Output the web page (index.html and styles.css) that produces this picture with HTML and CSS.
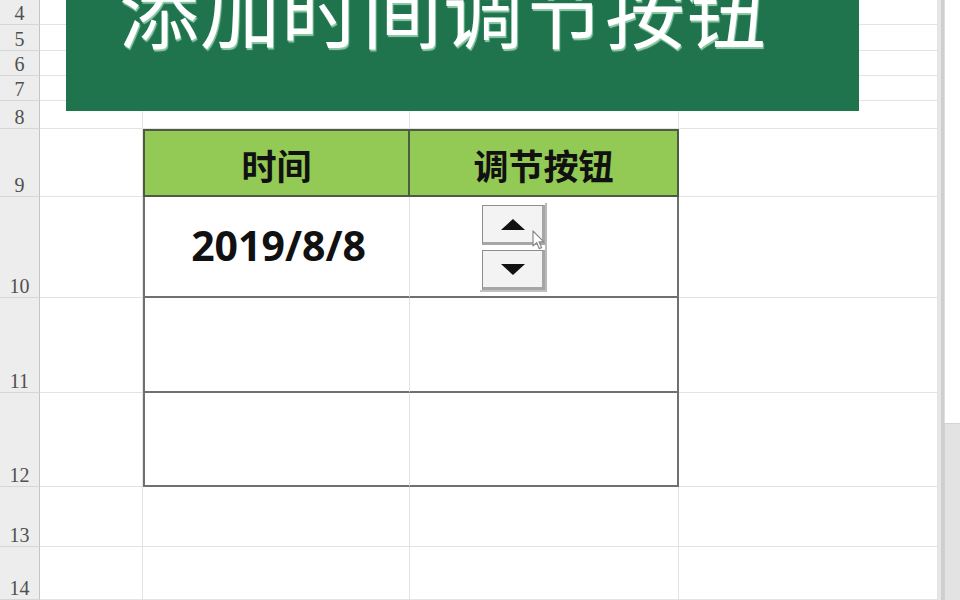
FILE: index.html
```html
<!DOCTYPE html>
<html lang="zh-CN">
<head>
<meta charset="utf-8">
<title>添加时间调节按钮</title>
<link rel="stylesheet" href="styles.css">
</head>
<body>
<div class="screen">
  <div class="sheet">
    <div class="rh">4</div><div class="c"></div><div class="c"></div><div class="c"></div><div class="c"></div>
    <div class="rh">5</div><div class="c"></div><div class="c"></div><div class="c"></div><div class="c"></div>
    <div class="rh">6</div><div class="c"></div><div class="c"></div><div class="c"></div><div class="c"></div>
    <div class="rh">7</div><div class="c"></div><div class="c"></div><div class="c"></div><div class="c"></div>
    <div class="rh">8</div><div class="c"></div><div class="c"></div><div class="c"></div><div class="c"></div>

    <div class="rh">9</div><div class="c"></div><div class="c th th-l">时间</div><div class="c th th-r">调节按钮</div><div class="c"></div>

    <div class="rh">10</div><div class="c"></div><div class="c td-l date">2019/8/8</div>
    <div class="c td-r spin-cell">
      <div class="spinner">
        <div class="spin-btn">
          <svg class="tri" width="24" height="11" viewBox="0 0 24 11"><polygon points="12,0 24,11 0,11" fill="#111"/></svg>
        </div>
        <div class="spin-btn">
          <svg class="tri" width="24" height="11" viewBox="0 0 24 11"><polygon points="0,0 24,0 12,11" fill="#111"/></svg>
        </div>
        <svg class="cursor" width="13" height="20" viewBox="0 0 13 20"><path d="M1,1 L1,16 L4.6,12.6 L7.2,18.6 L9.6,17.6 L7,11.8 L11.8,11.8 Z" fill="#fff" stroke="#8a8a8a" stroke-width="1.2" stroke-linejoin="round"/></svg>
      </div>
    </div>
    <div class="c"></div>

    <div class="rh">11</div><div class="c"></div><div class="c td-l"></div><div class="c td-r"></div><div class="c"></div>
    <div class="rh">12</div><div class="c"></div><div class="c td-l"></div><div class="c td-r"></div><div class="c"></div>
    <div class="rh">13</div><div class="c"></div><div class="c"></div><div class="c"></div><div class="c"></div>
    <div class="rh">14</div><div class="c"></div><div class="c"></div><div class="c"></div><div class="c"></div>

    <div class="banner"><span class="banner-title">添加时间调节按钮</span></div>
  </div>
  <div class="vscroll">
    <div class="track"></div>
    <div class="thumb"></div>
  </div>
</div>
</body>
</html>
```
FILE: styles.css
```css
* { box-sizing: border-box; }

html, body {
  margin: 0;
  padding: 0;
  background: #ffffff;
}

body {
  width: 960px;
  height: 600px;
  overflow: hidden;
  font-family: "Noto Sans", "Noto Sans CJK SC", sans-serif;
}

.screen {
  display: flex;
  width: 960px;
  height: 600px;
  overflow: hidden;
}

.sheet {
  position: relative;
  display: grid;
  grid-template-columns: 40px 103px 267px 269px 259px;
  grid-template-rows: 25px 26px 25px 25px 28px 68px 101px 95px 94px 60px 53px;
  width: 938px;
  height: 600px;
  flex: none;
}

.rh {
  display: flex;
  align-items: flex-end;
  justify-content: center;
  background: #ededed;
  border-right: 1px solid #c4c4c4;
  border-bottom: 1px solid #d6d6d6;
  font-family: "Liberation Serif", "DejaVu Serif", serif;
  font-size: 20px;
  line-height: 1;
  color: #505050;
  padding-bottom: 1px;
}

.c {
  border-right: 1px solid #e3e3e3;
  border-bottom: 1px solid #e3e3e3;
  background: #ffffff;
}

.th {
  display: flex;
  align-items: center;
  justify-content: center;
  background: #93c955;
  border-top: 2px solid #4f5a45;
  border-bottom: 2px solid #4f5a45;
  font-family: "Noto Sans CJK SC", sans-serif;
  font-weight: 700;
  font-size: 35px;
  color: #111111;
  padding-top: 2px;
}

.th-l {
  border-left: 2px solid #4f5a45;
  border-right: 2px solid #4f5a45;
}

.th-r {
  border-right: 2px solid #4f5a45;
}

.td-l {
  border-left: 2px solid #707070;
  border-bottom: 2px solid #707070;
}

.td-r {
  border-right: 2px solid #707070;
  border-bottom: 2px solid #707070;
}

.date {
  display: flex;
  align-items: center;
  justify-content: center;
  font-family: "Noto Sans", "Open Sans", sans-serif;
  font-weight: 700;
  font-size: 41px;
  color: #111111;
  padding-left: 3px;
  padding-bottom: 4px;
}

.spin-cell {
  position: relative;
}

.spinner {
  position: absolute;
  left: 70px;
  top: 6px;
  width: 67px;
  height: 89px;
  padding: 2px 0 0 2px;
  border-right: 2px solid #b9b9b9;
  border-bottom: 2px solid #c2c2c2;
  display: flex;
  flex-direction: column;
  gap: 5px;
}

.spin-btn {
  height: 40px;
  flex: none;
  display: flex;
  align-items: center;
  justify-content: center;
  background: #f3f3f3;
  border: 1px solid #8e8e8e;
  border-right: 3px solid #a6a6a6;
  border-bottom: 3px solid #a6a6a6;
}

.tri {
  display: block;
}

.cursor {
  position: absolute;
  left: 52px;
  top: 27px;
}

.banner {
  position: absolute;
  left: 66px;
  top: 0;
  width: 793px;
  height: 111px;
  background: #1f744e;
  overflow: hidden;
}

.banner-title {
  position: absolute;
  left: 53px;
  top: -33px;
  font-family: "Noto Sans CJK SC", sans-serif;
  font-weight: 400;
  font-size: 80px;
  line-height: 80px;
  letter-spacing: 1px;
  white-space: nowrap;
  color: #ffffff;
  text-shadow: 1px 2px 1px rgba(190, 240, 205, 0.7);
}

.vscroll {
  width: 22px;
  height: 600px;
  flex: none;
  display: flex;
  flex-direction: column;
  background: linear-gradient(to right, #e6e6e6 0 3px, #cfcfcf 3px 6px, #dedede 6px 7px, #ffffff 7px);
}

.track {
  height: 423px;
  flex: none;
}

.thumb {
  flex: 1;
  margin-left: 6px;
  background: #e3e3e3;
  border-top: 1px solid #d4d4d4;
  border-left: 1px solid #d0d0d0;
}
```
